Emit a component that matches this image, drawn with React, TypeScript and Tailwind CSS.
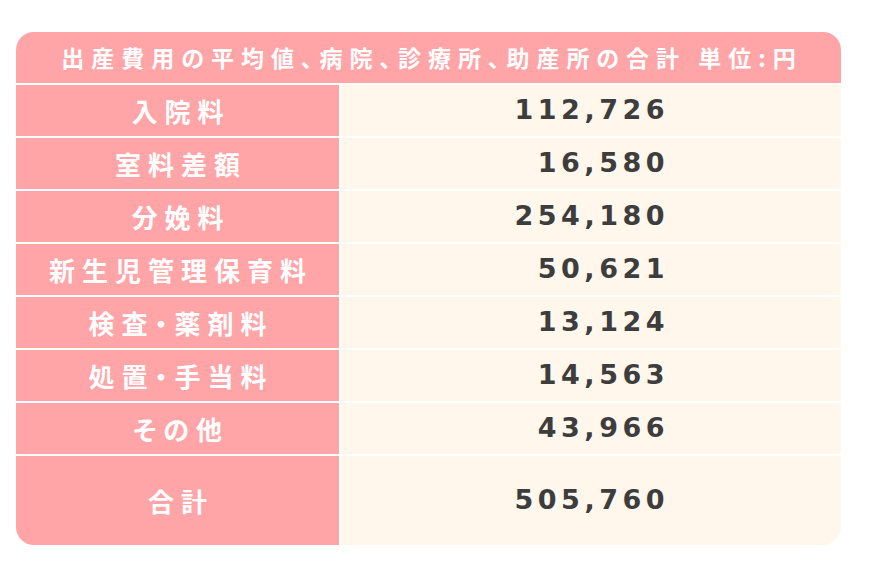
import React from 'react';

const rows: { label: string; value: string }[] = [
  { label: '入院料', value: '112,726' },
  { label: '室料差額', value: '16,580' },
  { label: '分娩料', value: '254,180' },
  { label: '新生児管理保育料', value: '50,621' },
  { label: '検査・薬剤料', value: '13,124' },
  { label: '処置・手当料', value: '14,563' },
  { label: 'その他', value: '43,966' },
];

const jp = "font-['Noto_Sans_CJK_JP',sans-serif] [font-feature-settings:'palt']";
const num = "font-['DejaVu_Sans',sans-serif]";

export default function App() {
  return (
    <div className="min-h-screen bg-white pt-[32px] pl-[16px]">
      <div className="w-[825px] rounded-[18px] overflow-hidden bg-white flex flex-col gap-[2px]">
        {/* HEADER */}
        <div className={`h-[51px] bg-[#ffa4a7] flex items-center justify-center text-white font-bold text-[23px] tracking-[7px] pl-[7px] whitespace-pre ${jp}`}>
          出産費用の平均値、病院、診療所、助産所の合計 単位:円
        </div>
        {/* ROWS */}
        {rows.map((r) => (
          <div key={r.label} className="h-[51px] grid grid-cols-[323px_1fr] gap-[2px]">
            <div className={`bg-[#ffa4a7] flex items-center justify-center text-white font-bold text-[26px] tracking-[7px] pl-[7px] ${jp}`}>
              {r.label}
            </div>
            <div className={`bg-[#fff7ec] flex items-center justify-end pr-[172px] text-[#3d3d3d] font-bold text-[27px] tracking-[4.5px] ${num}`}>
              {r.value}
            </div>
          </div>
        ))}
        {/* TOTAL */}
        <div className="h-[89px] grid grid-cols-[323px_1fr] gap-[2px]">
          <div className={`bg-[#ffa4a7] flex items-center justify-center text-white font-bold text-[26px] tracking-[7px] pl-[7px] ${jp}`}>
            合計
          </div>
          <div className={`bg-[#fff7ec] flex items-center justify-end pr-[172px] text-[#3d3d3d] font-bold text-[27px] tracking-[4.5px] ${num}`}>
            505,760
          </div>
        </div>
      </div>
    </div>
  );
}
